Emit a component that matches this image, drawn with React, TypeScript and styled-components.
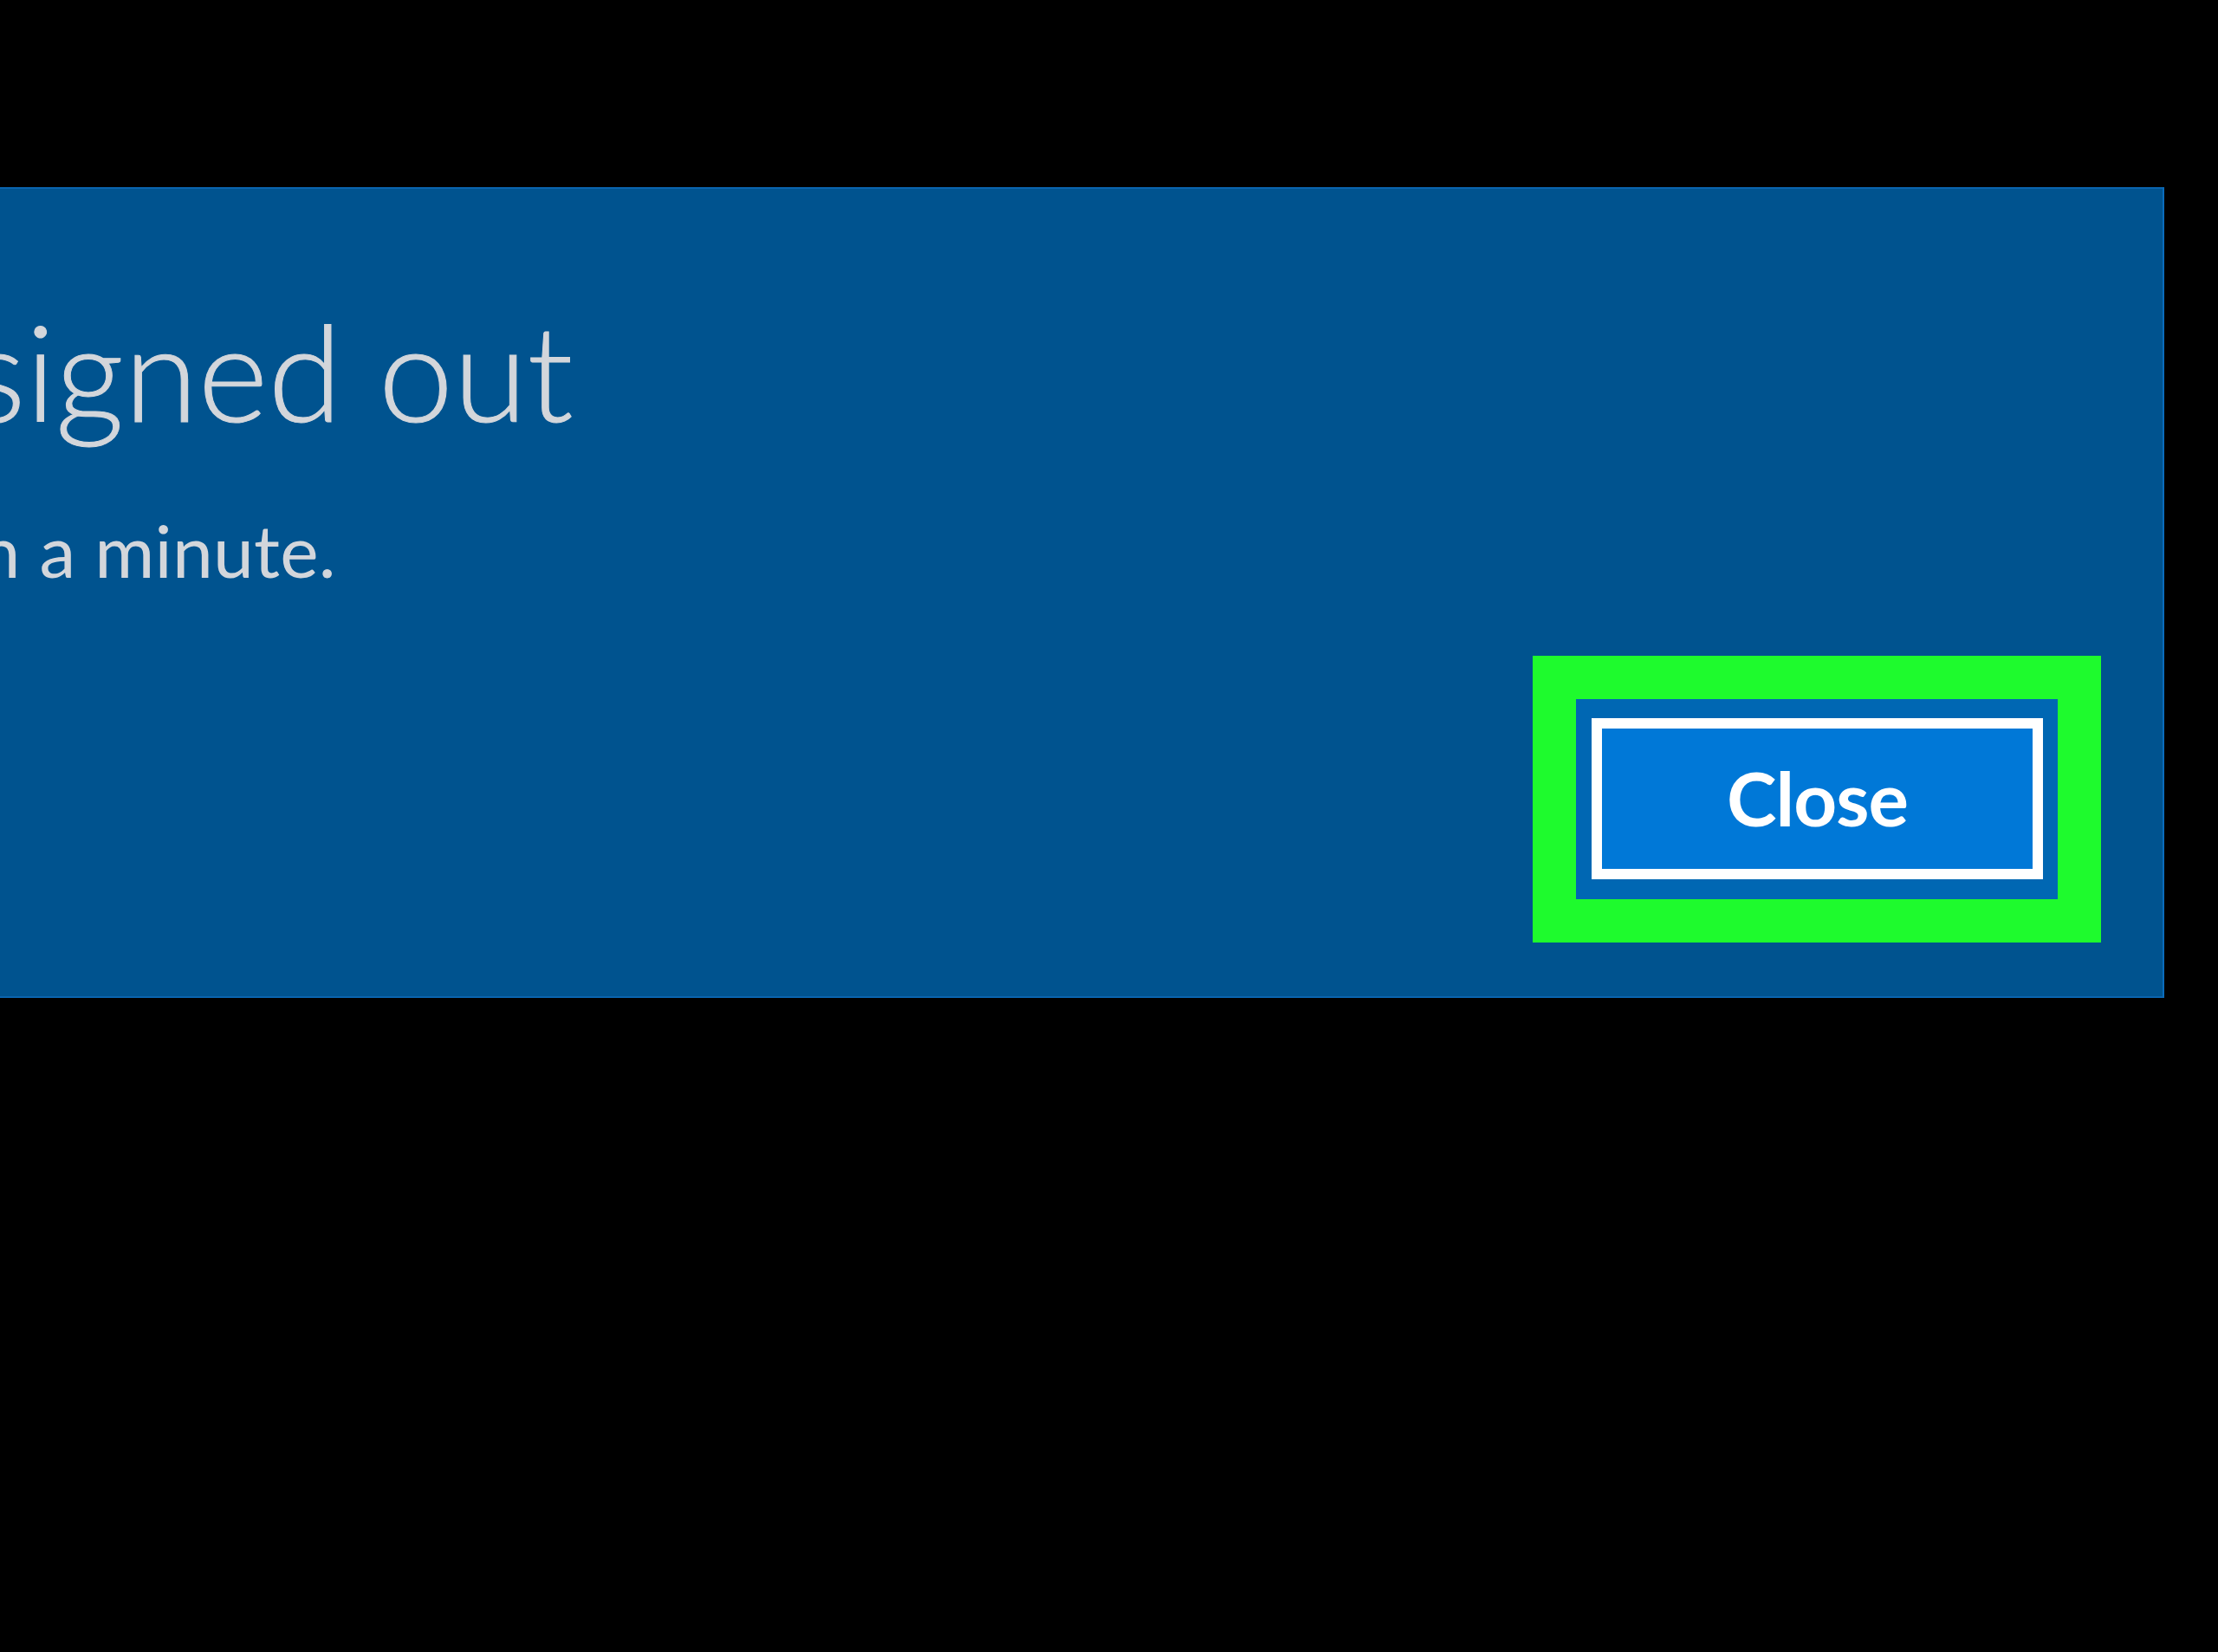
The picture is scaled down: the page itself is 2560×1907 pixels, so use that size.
import React from "react";
import { createGlobalStyle, styled } from "styled-components";

const GlobalStyle = createGlobalStyle`
  html, body {
    margin: 0;
    padding: 0;
    background: #000;
    overflow: hidden;
  }
`;

function App() {
  return (
    <>
      <GlobalStyle />
      <Screen>
        <Dialog>
          <Title>You’re about to be signed out</Title>
          <Message>Windows is about to sign you out in a minute.</Message>
          <Footer>
            <Highlight>
              <CloseButton type="button">Close</CloseButton>
            </Highlight>
          </Footer>
        </Dialog>
      </Screen>
    </>
  );
}

export default App;

const Screen = styled.div`
  width: 100vw;
  height: 100vh;
  overflow: hidden;
  background: #000;
  padding-top: 216px;
  box-sizing: border-box;
`;

// the dialog is wider than the screen, its left part runs off the edge
const Dialog = styled.div`
  margin: 0 62px 0 -1400px;
  padding: 132px 71px 62px 94px;
  background: #00538f;
  border-top: 2px solid #0a64ae;
  border-right: 2px solid #0a6cbc;
  border-bottom: 2px solid #0a64ae;
  display: flex;
  flex-direction: column;
`;

const Title = styled.h1`
  margin: 0;
  font-family: Lato, "Open Sans", sans-serif;
  font-weight: 300;
  font-size: 155px;
  line-height: 1;
  color: #d3d6db;
  white-space: nowrap;
  -webkit-text-stroke: 1px #d3d6db;
`;

const Message = styled.p`
  margin: 88px 0 0;
  font-family: Lato, "Open Sans", sans-serif;
  font-weight: 400;
  font-size: 84px;
  letter-spacing: 0.25px;
  line-height: 1;
  color: #d3d6db;
  white-space: nowrap;
`;

const Footer = styled.div`
  display: flex;
  justify-content: flex-end;
  margin-top: 80px;
`;

const Highlight = styled.div`
  border: 50px solid #1efb2d;
  background: #0067b3;
  padding: 22px 17px 23px 18px;
  display: flex;
`;

const CloseButton = styled.button`
  width: 521px;
  height: 186px;
  box-sizing: border-box;
  border: 12px solid #ffffff;
  background: #0078d7;
  color: #ffffff;
  font-family: Lato, "Open Sans", sans-serif;
  font-weight: 700;
  font-size: 87px;
  letter-spacing: -1px;
  line-height: 1;
  display: flex;
  align-items: center;
  justify-content: center;
  padding: 0 0 4px;
  cursor: pointer;
`;
